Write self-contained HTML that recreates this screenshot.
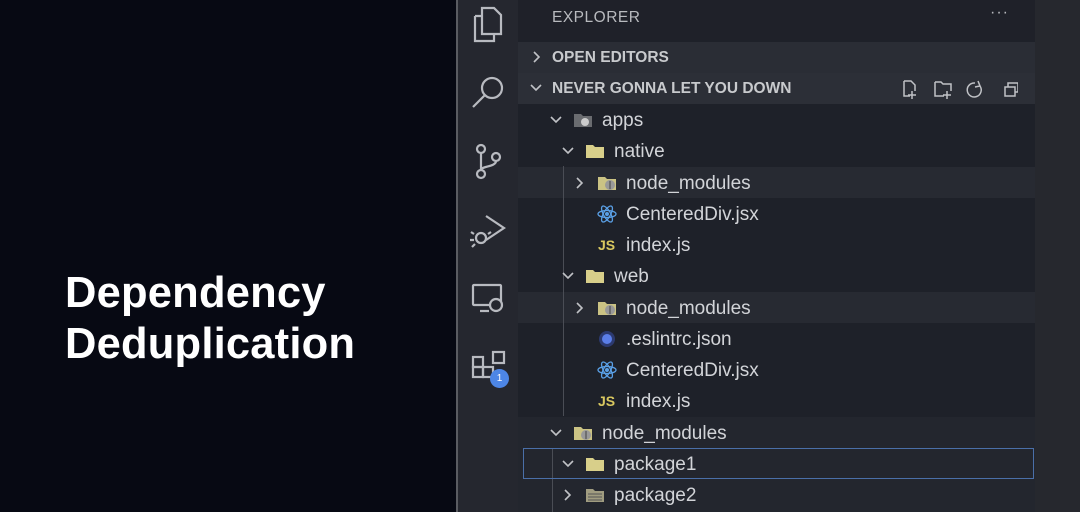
<!DOCTYPE html>
<html><head><meta charset="utf-8"><style>
*{margin:0;padding:0;box-sizing:border-box}
body{width:1080px;height:512px;overflow:hidden;background:#070913;position:relative;font-family:"Liberation Sans",sans-serif}
.abs{position:absolute}
.title{left:65px;color:#fff;font-weight:bold;font-size:43.5px;letter-spacing:0.2px}
.act{left:456px;top:0;width:62px;height:512px;background:#25272f;border-left:2px solid #5a5c62}
.side{left:518px;top:0;width:517px;height:512px;background:#1e2129}
.rstrip{left:1035px;top:0;width:45px;height:512px;background:#26282e}
.row{position:absolute;left:518px;width:517px;height:31px}
.h{position:absolute;color:#c8cacd;font-size:15.5px;font-weight:bold;top:7px}
.chev{position:absolute;top:8px;width:14px;height:14px}
svg{display:block}
</style></head><body>
<div class="abs title" style="top:269px">Dependency</div>
<div class="abs title" style="top:320px">Deduplication</div>
<div class="abs act"></div>
<div class="abs side"></div>
<div class="abs rstrip"></div>

<svg class="abs" style="left:456px;top:0" width="62" height="420" fill="none" stroke="#b8bac0" stroke-width="2.2">
 <path d="M26 8h12l7 7v19H26z M19 16h7 M19 16v25h19v-7"/>
 <circle cx="36" cy="88" r="10"/><path d="M29 95l-12 12"/>
 <circle cx="25" cy="149" r="4"/><circle cx="25" cy="174" r="4"/><circle cx="40" cy="157" r="4"/><path d="M25 153v17 M40 161c0 6-15 5-15 9"/>
 <path d="M30 216l18 12-18 12" /><circle cx="25" cy="238" r="5"/><path d="M18 234l-3-2 M18 240h-4 M19 244l-3 3 M32 234l3-2"/>
 <rect x="17" y="285" width="28" height="20" rx="1"/><path d="M24 311h9"/><circle cx="40" cy="305" r="6" fill="#25272f"/>
 <rect x="17" y="357" width="10" height="10"/><rect x="17" y="367" width="10" height="10"/><rect x="27" y="367" width="10" height="10"/><rect x="37" y="352" width="11" height="11"/>
</svg>
<div class="abs" style="left:490px;top:369px;width:19px;height:19px;border-radius:50%;background:#4d86e6;color:#fff;font-size:10px;text-align:center;line-height:19px">1</div>

<div class="abs" style="left:518px;top:0;width:517px;height:40px;background:#1f2129"></div>
<div class="abs" style="left:552px;top:9px;color:#b8babe;font-size:15.5px;letter-spacing:0.5px">EXPLORER</div>
<div class="abs" style="left:990px;top:4px;color:#b8babe;font-size:16px;letter-spacing:1px">···</div>
<div class="row" style="top:42px;background:#2a2d35"><svg class="chev" style="left:12px" viewBox="0 0 14 14" fill="none" stroke="#c0c2c6" stroke-width="1.6"><path d="M4 2l5 5-5 5"/></svg><div class="h" style="left:34px">OPEN EDITORS</div></div>
<div class="row" style="top:73px;background:#2c2f37"><svg class="chev" style="left:11px" viewBox="0 0 14 14" fill="none" stroke="#c0c2c6" stroke-width="1.6"><path d="M2 4l5 5 5-5"/></svg><div class="h" style="left:34px">NEVER GONNA LET YOU DOWN</div>
<svg class="abs" style="left:380px;top:4px" width="120" height="24" fill="none" stroke="#c0c2c6" stroke-width="1.5"><path d="M6 4h7l4 4v6 M6 4v15h6 M14 14v8 M10 18h8"/><path d="M37 5h6l2 2h8v7 M37 5v14h9 M49 14v8 M45 18h8"/><path d="M77 6a7 7 0 1 0 5 3 M80 4l2 5-5 1"/><rect x="107" y="10" width="10" height="9"/><path d="M110 10V6h10v9h-3"/></svg></div>

<div class="abs" style="left:518px;top:167px;width:517px;height:31px;background:#272a32"></div>
<div class="abs" style="left:518px;top:292px;width:517px;height:31px;background:#272a32"></div>
<div class="abs" style="left:518px;top:417px;width:517px;height:95px;background:#23262e"></div>
<div class="abs" style="left:563px;top:166px;width:1px;height:250px;background:#4a4d55"></div>
<div class="abs" style="left:552px;top:448px;width:1px;height:64px;background:#4a4d55"></div>
<div class="abs" style="left:523px;top:448px;width:511px;height:31px;border:1px solid #4a6fa8"></div>

<div id="tree"></div>
<script>
const rows=[
[104,0,'d','g','apps'],[135,1,'d','y','native'],[167,2,'r','n','node_modules'],[198,2,'','re','CenteredDiv.jsx'],[229,2,'','js','index.js'],
[260,1,'d','y','web'],[292,2,'r','n','node_modules'],[323,2,'','es','.eslintrc.json'],[354,2,'','re','CenteredDiv.jsx'],[385,2,'','js','index.js'],
[417,0,'d','n','node_modules'],[448,1,'d','y','package1'],[479,1,'r','p','package2']];
let h='';
for(const [y,l,c,ic,tx] of rows){
 const x=518+31+l*12;
 if(c==='d')h+=`<svg class="abs" style="left:${x}px;top:${y+9}px" width="14" height="14" fill="none" stroke="#c0c2c6" stroke-width="1.6"><path d="M2 4l5 5 5-5"/></svg>`;
 if(c==='r')h+=`<svg class="abs" style="left:${x}px;top:${y+9}px" width="14" height="14" fill="none" stroke="#c0c2c6" stroke-width="1.6"><path d="M4 2l5 5-5 5"/></svg>`;
 const ix=x+24;
 let s='';
 if(ic==='y')s=`<path d="M1 4h7l2 2h9v11H1z" fill="#d8cf8a"/>`;
 else if(ic==='g')s=`<path d="M1 4h7l2 2h9v11H1z" fill="#6a6c70"/><circle cx="12" cy="12" r="4" fill="#ccc"/>`;
 else if(ic==='n')s=`<path d="M1 4h7l2 2h9v11H1z" fill="#cbc384"/><circle cx="13" cy="12" r="5" fill="#999"/><path d="M13 8v8" stroke="#444"/>`;
 else if(ic==='p')s=`<path d="M1 4h7l2 2h9v11H1z" fill="#a09c80"/><path d="M3 9h14M3 12h14M3 15h14" stroke="#555"/>`;
 else if(ic==='re')s=`<g fill="none" stroke="#5aa0e6" stroke-width="1.3"><ellipse cx="10" cy="10" rx="9" ry="3.5"/><ellipse cx="10" cy="10" rx="9" ry="3.5" transform="rotate(60 10 10)"/><ellipse cx="10" cy="10" rx="9" ry="3.5" transform="rotate(-60 10 10)"/></g><circle cx="10" cy="10" r="2" fill="#5aa0e6"/>`;
 else if(ic==='es')s=`<circle cx="10" cy="10" r="8" fill="#2c3a70"/><circle cx="10" cy="10" r="5" fill="#5b7ee8"/>`;
 if(ic==='js')h+=`<div class="abs" style="left:${ix+1}px;top:${y+8}px;color:#d9c860;font-weight:bold;font-size:14px">JS</div>`;
 else h+=`<svg class="abs" style="left:${ix}px;top:${y+6}px" width="20" height="20">${s}</svg>`;
 h+=`<div class="abs" style="left:${ix+29}px;top:${y+6}px;color:#d2d4d8;font-size:19px">${tx}</div>`;
}
document.getElementById('tree').innerHTML=h;
</script>
</body></html>
